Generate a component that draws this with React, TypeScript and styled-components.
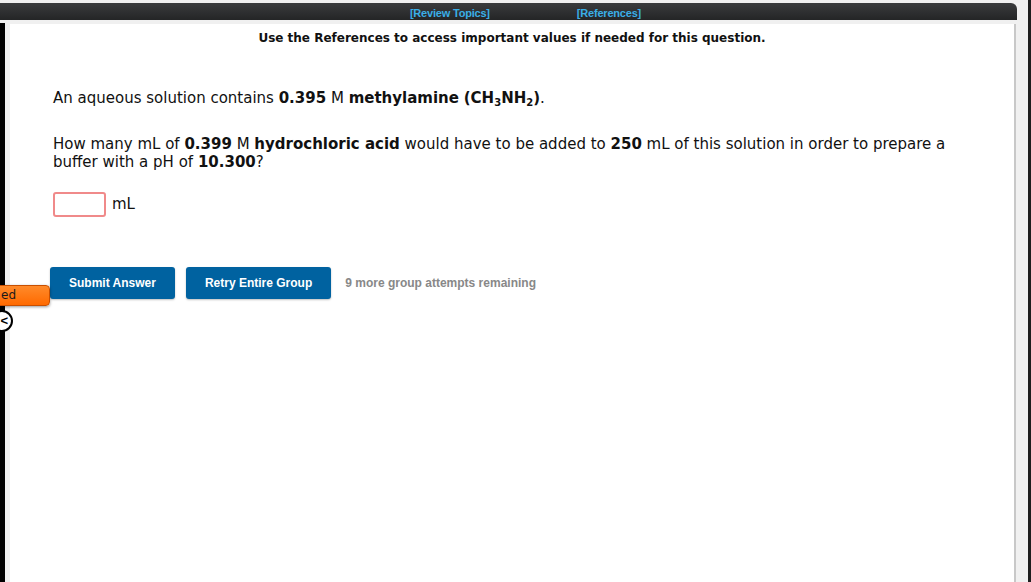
import { createGlobalStyle, styled } from "styled-components";

const GlobalStyle = createGlobalStyle`
  html, body {
    margin: 0;
    padding: 0;
    background: #f0f0f0;
    overflow: hidden;
  }
`;

function App() {
  return (
    <>
      <GlobalStyle />
      <Page>
        <LeftRail>
          <SideTab>ed</SideTab>
          <CollapseButton>&lt;</CollapseButton>
        </LeftRail>
        <Frame>
          <TopBar>
            <BarLink>[Review Topics]</BarLink>
            <BarLink>[References]</BarLink>
          </TopBar>
          <Panel>
            <Notice>Use the References to access important values if needed for this question.</Notice>
            <Question>
              <Para>
                An aqueous solution contains <b>0.395</b> M <b>methylamine</b>{" "}
                <b>
                  (CH<sub>3</sub>NH<sub>2</sub>)
                </b>
                .
              </Para>
              <Para>
                How many mL of <b>0.399</b> M <b>hydrochloric acid</b> would have to be added to <b>250</b> mL of
                this solution in order to prepare a buffer with a pH of <b>10.300</b>?
              </Para>
              <AnswerRow>
                <AnswerInput />
                <Unit>mL</Unit>
              </AnswerRow>
            </Question>
            <Actions>
              <ActionButton>Submit Answer</ActionButton>
              <ActionButton>Retry Entire Group</ActionButton>
              <Attempts>9 more group attempts remaining</Attempts>
            </Actions>
          </Panel>
        </Frame>
        <RightRail />
      </Page>
    </>
  );
}

const Page = styled.div`
  display: flex;
  height: 582px;
  padding-top: 3px;
  box-sizing: border-box;
  position: relative;
`;

const LeftRail = styled.div`
  position: absolute;
  left: 0;
  top: 23px;
  bottom: 0;
  width: 5px;
  background: #000;
`;

const SideTab = styled.div`
  position: absolute;
  top: 262px;
  left: -30px;
  width: 80px;
  height: 21px;
  box-sizing: border-box;
  padding-left: 30px;
  background: linear-gradient(#ff8a2a, #ff6a00);
  border: 1px solid #c84f00;
  border-radius: 0 4px 4px 0;
  box-shadow: 0 1px 3px rgba(0, 0, 0, 0.4);
  color: #1a1a1a;
  font: 12px "DejaVu Sans", Verdana, sans-serif;
  line-height: 19px;
  z-index: 2;
`;

const CollapseButton = styled.div`
  position: absolute;
  top: 287px;
  left: -9px;
  width: 22px;
  height: 22px;
  box-sizing: border-box;
  border: 2px solid #000;
  border-radius: 50%;
  background: #fff;
  color: #000;
  font: bold 13px "Liberation Sans", Arial, sans-serif;
  line-height: 17px;
  text-align: right;
  padding-right: 3px;
  z-index: 2;
`;

const Frame = styled.div`
  width: 1017px;
  display: flex;
  flex-direction: column;
`;

const TopBar = styled.div`
  height: 17px;
  background: linear-gradient(#3a3b3d, #242526);
  border-radius: 0 6px 0 0;
  display: flex;
  justify-content: center;
  gap: 87px;
  align-items: center;
  padding: 3px 0 0 34px;
  box-sizing: border-box;
`;

const BarLink = styled.span`
  color: #3aaee6;
  font: bold 11px "Liberation Sans", Arial, sans-serif;
  letter-spacing: -0.2px;
`;

const Panel = styled.div`
  flex: 1;
  margin: 4px 3px 0 10px;
  background: #fff;
  box-shadow: 2px 0 0 #c8c8c8;
  display: flex;
  flex-direction: column;
`;

const Notice = styled.div`
  text-align: center;
  font: bold 12px "DejaVu Sans", Verdana, sans-serif;
  color: #111;
  padding-top: 7px;
`;

const Question = styled.div`
  padding: 44px 0 0 43px;
  font: 15px "DejaVu Sans", Verdana, sans-serif;
  color: #111;
  line-height: 18px;

  sub {
    font-size: 10px;
    line-height: 0;
    vertical-align: -3px;
  }
`;

const Para = styled.p`
  margin: 0 0 28px;
  max-width: 920px;
`;

const AnswerRow = styled.div`
  display: flex;
  align-items: center;
  gap: 6px;
  margin-top: -7px;
`;

const AnswerInput = styled.div`
  width: 53px;
  height: 25px;
  box-sizing: border-box;
  border: 2px solid #f08a8a;
  border-radius: 3px;
  background: #fff;
`;

const Unit = styled.span`
  margin-top: -2px;
`;

const Actions = styled.div`
  display: flex;
  align-items: center;
  gap: 11px;
  padding: 50px 0 0 40px;
`;

const ActionButton = styled.button`
  height: 32px;
  padding: 0 19px;
  border: none;
  border-radius: 3px;
  background: #0062a0;
  box-shadow: 0 1px 2px rgba(0, 0, 0, 0.25);
  color: #fff;
  font: bold 12px "Liberation Sans", Arial, sans-serif;
`;

const Attempts = styled.span`
  margin-left: 3px;
  color: #888;
  font: bold 12px "Liberation Sans", Arial, sans-serif;
`;

const RightRail = styled.div`
  margin-left: 11px;
  margin-top: -3px;
  width: 3px;
  background: #1e1e1e;
`;

export default App;
